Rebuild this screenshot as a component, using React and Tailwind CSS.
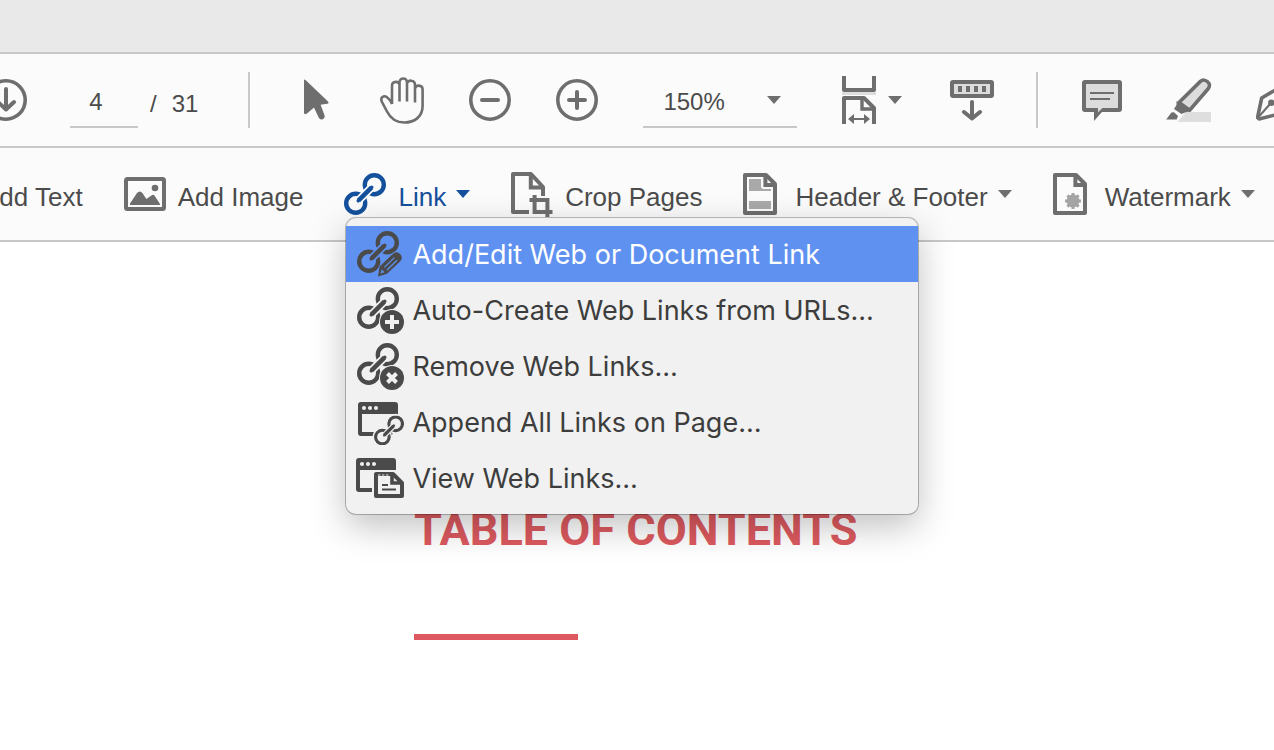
import React, { useId } from "react";

function Caret({ className = "" }) {
  return (
    <svg width="14" height="8" viewBox="0 0 14 8" fill="currentColor" className={"shrink-0 " + className} aria-hidden="true">
      <path d="M0 0H14L7 8Z" />
    </svg>
  );
}

function Icon({ w, h, children }) {
  return (
    <svg
      width={w}
      height={h}
      viewBox={`0 0 ${w} ${h}`}
      fill="none"
      stroke="currentColor"
      strokeWidth="4"
      className="shrink-0"
      aria-hidden="true"
    >
      {children}
    </svg>
  );
}

const NextPageIcon = () => (
  <Icon w={42} h={42}>
    <circle cx="21" cy="21" r="19.2" strokeWidth="3.6" />
    <path d="M21 10V29M13 23L21 30.5L29 23" strokeLinecap="round" strokeLinejoin="round" />
  </Icon>
);

const PointerIcon = () => (
  <Icon w={26} h={42}>
    <path
      d="M1 1.8Q1 -0.4 2.8 1.2L25 22.6Q26.4 24.4 24.2 24.8L17.6 25.8L21.6 36.6Q22.2 39 19.8 40.2Q17 41.2 15.8 38.8L11 28.6L4 34.4Q1 36.2 1 33.6Z"
      fill="currentColor"
      stroke="none"
    />
  </Icon>
);

const HandIcon = () => (
  <Icon w={44} h={48}>
    <path
      strokeWidth="2.6"
      strokeLinejoin="round"
      d="M12 28V10C12 4.6 19.5 4.6 19.5 9.6V25.5M19.5 10V6.6C19.5 1.2 27 1.2 27 6.6V25.5M27 8C27 3.4 35 3.4 35 9V26.5M35 13C35 8.4 42.6 8.4 42.6 13.6V30C42.6 41 34 46.5 24.5 46.5C14.5 46.5 10 41.5 7 35.5L2 26C-0.2 21.4 3.8 19 7 21.2C9.4 22.8 11 25.6 12 28"
    />
  </Icon>
);

const ZoomIcon = ({ plus }) => (
  <Icon w={42} h={42}>
    <circle cx="21" cy="21" r="19.2" strokeWidth="3.6" />
    <path d={plus ? "M13 21H29M21 13V29" : "M13 21H29"} strokeLinecap="round" />
  </Icon>
);

const FitWidthIcon = () => (
  <Icon w={34} h={48}>
    <path d="M0 16H34V19H0Z" fill="#dedede" stroke="none" />
    <path d="M2 0V14H32V0M2 48V22H22L32 32V48" strokeLinejoin="round" />
    <path d="M20 22V33H32" strokeWidth="3.4" />
    <path d="M10 43H24" strokeWidth="2" />
    <path d="M6 43L12 38V48ZM28 43L22 38V48Z" fill="currentColor" stroke="none" />
  </Icon>
);

const KeyboardIcon = () => (
  <Icon w={44} h={42}>
    <rect x="2" y="3" width="40" height="14" rx="1" fill="#dcdcdc" />
    <path d="M10 7V13M18 7V13M26 7V13M34 7V13" />
    <path d="M22 23V39M14 33L22 39.5L30 33" strokeLinecap="round" strokeLinejoin="round" />
  </Icon>
);

const CommentIcon = () => (
  <Icon w={40} h={42}>
    <path d="M12 30H22.6L12 42Z" fill="currentColor" stroke="none" />
    <rect x="2" y="3" width="36" height="28" rx="1" fill="#dcdcdc" />
    <path d="M16 28.8H20.6L16 33.6Z" fill="#dcdcdc" stroke="none" />
    <path d="M8 14H32M8 20H28" strokeWidth="2" />
  </Icon>
);

const HighlighterIcon = () => (
  <Icon w={46} h={44}>
    <path d="M20 34H45V44H11.5Z" fill="#dedede" stroke="none" />
    <path d="M13 24.5L34.4 3.4C39 -0.6 46.4 6 42.2 10.8L23.6 32.2Z" fill="#dcdcdc" strokeWidth="3.6" strokeLinejoin="round" />
    <path d="M10.5 23L25 33L19 34.5L15.5 36L8 31L10.5 27Z" fill="currentColor" stroke="none" />
    <path d="M0.2 41.6L5.4 34.6L8 34.2L12 38L10.6 41.6Z" fill="currentColor" stroke="none" />
  </Icon>
);

const SignIcon = () => (
  <Icon w={40} h={42}>
    <path d="M1.5 38.5L5.7 19L19 11.2L34 19L25 34.5L3.1 40Z" strokeLinejoin="round" strokeWidth="3.6" />
    <path d="M2.5 38L14.5 24.5" strokeWidth="2" />
    <circle cx="15.3" cy="23.8" r="3.2" fill="currentColor" stroke="none" />
  </Icon>
);

const ImageIcon = () => (
  <Icon w={42} h={34}>
    <rect x="2" y="2" width="38" height="30" rx="1.5" />
    <circle cx="31" cy="11" r="3.3" fill="currentColor" stroke="none" />
    <path d="M6 28V26.5L13 16Q15.8 13 18.4 16L22.4 22L27.4 18.4Q29.4 17 30.8 19L36 27V28Z" fill="currentColor" stroke="none" />
  </Icon>
);

function ChainPaths() {
  const gap = useId();
  return (
    <>
      <mask id={gap} maskUnits="userSpaceOnUse" x="0" y="0" width="42" height="42">
        <rect width="42" height="42" fill="#fff" stroke="none" />
        <path d="M12.6 29.4L29.4 12.6" stroke="#000" strokeWidth="8" />
      </mask>
      <g mask={`url(#${gap})`} strokeWidth="4.4">
        <circle cx="30.3" cy="11.7" r="9.5" />
        <circle cx="11.7" cy="30.3" r="9.5" />
      </g>
      <path d="M14.6 27.4L27.4 14.6" strokeWidth="4.6" />
      <path d="M14.2 27.8L15.4 26.6M26.6 15.4L27.8 14.2" strokeWidth="3.4" strokeLinecap="round" />
    </>
  );
}

const LinkIcon = () => (
  <Icon w={42} h={42}>
    <ChainPaths />
  </Icon>
);

const CropIcon = () => (
  <Icon w={42} h={46}>
    <path d="M18 41H2V3H20L32 16V25" strokeLinejoin="round" />
    <path d="M19.8 3V16.6H32" />
    <path d="M18.5 29H36.4V46M23.6 24V41H41.5" />
  </Icon>
);

const HeaderFooterIcon = () => (
  <Icon w={34} h={42}>
    <path d="M2 2H23L32 11V40H2Z" strokeLinejoin="round" />
    <path d="M22.4 2V12H32" />
    <path d="M6 6H18V13Q18 16 21 16H28V18H6ZM6 28H28V36H6Z" fill="#a9a9a9" stroke="none" />
  </Icon>
);

const WatermarkIcon = () => (
  <Icon w={34} h={42}>
    <path d="M2 2H23L32 11V40H2Z" strokeLinejoin="round" />
    <path d="M22.4 2V12H32" />
    <path d="M20 20V36M12 28H28M14.4 22.4L25.6 33.6M25.6 22.4L14.4 33.6" stroke="#a4a4a4" strokeWidth="3" />
    <circle cx="20" cy="28" r="6.4" fill="#a4a4a4" stroke="none" />
  </Icon>
);

const EditLinkIcon = () => (
  <Icon w={48} h={48}>
    <g transform="translate(1 0)">
      <ChainPaths />
    </g>
    <path d="M22 45L24 36L38 22.5Q42 20 45 24Q47 27 44 30L30 43Z" fill="#5f91f1" stroke="#5f91f1" strokeWidth="2.4" />
    <path d="M22 45.4L23.6 35.6L37.4 22.4Q41 19.8 44.6 23.4Q47.4 27 44 30.6L31 42.8Z" fill="currentColor" stroke="none" />
    <path d="M28.4 36.4L38.4 26.6M31 39L41 29.2" stroke="#5f91f1" strokeWidth="1.2" />
    <path d="M24.4 42.6L25.8 38.4L28.6 41.2Z" fill="#5f91f1" stroke="none" />
  </Icon>
);

const BadgeLinkIcon = ({ mark }) => (
  <Icon w={48} h={48}>
    <g transform="translate(1 0)">
      <ChainPaths />
    </g>
    <circle cx="36" cy="35" r="13" fill="#f1f1f1" stroke="none" />
    <circle cx="36" cy="35" r="12" fill="currentColor" stroke="none" />
    <path d={mark} stroke="#f1f1f1" />
  </Icon>
);

const AppendLinksIcon = () => (
  <Icon w={48} h={48}>
    <rect x="4" y="5" width="36" height="30" rx="1" />
    <path d="M3 4H41V15H3Z" fill="currentColor" stroke="none" />
    <g fill="#f1f1f1" stroke="none">
      <circle cx="8" cy="9" r="2" />
      <circle cx="14" cy="9" r="2" />
      <circle cx="20" cy="9" r="2" />
      <circle cx="39.7" cy="24.8" r="10" />
      <circle cx="26.3" cy="38.2" r="10" />
      <path d="M38 30H46V42H34Z" />
    </g>
    <g transform="translate(18 16.4) scale(.715)">
      <ChainPaths />
    </g>
  </Icon>
);

const ViewLinksIcon = () => (
  <Icon w={48} h={48}>
    <rect x="2" y="5" width="36" height="30" rx="1" />
    <path d="M1 4H39V15H1Z" fill="currentColor" stroke="none" />
    <g fill="#f1f1f1" stroke="none">
      <circle cx="6" cy="9" r="2" />
      <circle cx="12" cy="9" r="2" />
      <circle cx="18" cy="9" r="2" />
    </g>
    <path d="M16 15H48V45H16Z" fill="#f1f1f1" stroke="none" />
    <path d="M20 19H37L46 28V41H20Z" strokeLinejoin="round" />
    <path d="M36 18V28H46" strokeWidth="3.6" />
    <path d="M22 20H34" stroke="#9a9a9a" strokeWidth="2" strokeDasharray="2.4 1.6" />
    <path d="M26 30H32M26 34.5H40" strokeWidth="2" />
  </Icon>
);

const menuItems = [
  { label: "Add/Edit Web or Document Link", icon: <EditLinkIcon />, active: true },
  { label: "Auto-Create Web Links from URLs…", icon: <BadgeLinkIcon mark="M29 35H43M36 28V42" /> },
  { label: "Remove Web Links…", icon: <BadgeLinkIcon mark="M31.5 30.5L40.5 39.5M40.5 30.5L31.5 39.5" /> },
  { label: "Append All Links on Page…", icon: <AppendLinksIcon /> },
  { label: "View Web Links…", icon: <ViewLinksIcon /> },
];

function LinkMenu() {
  return (
    <ul
      role="menu"
      aria-label="Link"
      className="absolute top-[70px] left-0.5 z-10 w-[572px] rounded-[10px] bg-[#f1f1f1] py-2 shadow-[0_0_0_1px_rgba(0,0,0,0.25),0_12px_36px_rgba(0,0,0,0.25)]"
    >
      {menuItems.map((item) => (
        <li key={item.label} role="none">
          <button
            type="button"
            role="menuitem"
            className={
              item.active
                ? "flex h-14 w-full items-center gap-2 bg-[#5f91f1] pt-0.5 pl-[10px] text-white"
                : "flex h-14 w-full items-center gap-2 pt-0.5 pl-[10px] text-[#3d3d3d]"
            }
          >
            <span className="text-[#4a4a4a]">{item.icon}</span>
            <span className="whitespace-nowrap font-['Inter',sans-serif] text-[27px] leading-8">{item.label}</span>
          </button>
        </li>
      ))}
    </ul>
  );
}

function Tool({ icon, label, caret, active, wide }) {
  return (
    <button
      type="button"
      aria-haspopup={caret ? "menu" : undefined}
      className={
        active
          ? "flex h-full items-center gap-3 text-[#14509c]"
          : wide
            ? "flex h-full items-center gap-[18px] text-[#6e6e6e]"
            : "flex h-full items-center gap-3 text-[#6e6e6e]"
      }
    >
      {icon}
      <span className="flex items-center gap-[10px]">
        <span className={active ? "pt-1.5 whitespace-nowrap" : "pt-1.5 whitespace-nowrap text-[#4b4b4b]"}>{label}</span>
        {caret && <Caret />}
      </span>
    </button>
  );
}

function IconButton({ label, children }) {
  return (
    <button type="button" aria-label={label} className="flex shrink-0 items-center">
      {children}
    </button>
  );
}

const Divider = () => <div className="h-14 w-0.5 shrink-0 bg-[#c9c9c9]" />;

export default function App() {
  return (
    <div className="min-h-screen overflow-x-clip bg-white font-['Liberation_Sans',Arial,sans-serif]">
      <div className="h-[54px] border-b-2 border-[#c8c8c8] bg-[#e9e9e9]" />

      <header className="bg-[#fbfbfb]">
        <div className="flex h-[94px] items-center border-b-2 border-[#c8c8c8] text-2xl text-[#6e6e6e]">
          <div className="-ml-[15px] flex shrink-0 items-center">
            <IconButton label="Next page">
              <NextPageIcon />
            </IconButton>
            <input
              aria-label="Page number"
              defaultValue="4"
              className="ml-[43px] h-14 w-[68px] border-b-2 border-[#c8c8c8] bg-transparent pt-1.5 pr-4 text-center text-[#4b4b4b] outline-none"
            />
            <span className="ml-3 flex gap-[15px] pt-2 text-[#4b4b4b]">
              <span>/</span>
              <span>31</span>
            </span>
          </div>
          <div className="ml-[50px] flex shrink-0 items-center">
            <Divider />
            <div className="ml-[53px] flex items-center gap-[45px]">
              <div className="flex items-center gap-[51px]">
                <IconButton label="Select">
                  <PointerIcon />
                </IconButton>
                <IconButton label="Pan">
                  <HandIcon />
                </IconButton>
              </div>
              <IconButton label="Zoom out">
                <ZoomIcon />
              </IconButton>
              <IconButton label="Zoom in">
                <ZoomIcon plus />
              </IconButton>
              <div className="relative flex items-center">
                <select
                  aria-label="Zoom level"
                  defaultValue="150%"
                  className="h-14 w-[154px] appearance-none border-b-2 border-[#c8c8c8] bg-transparent pt-1.5 pl-5 text-[#4b4b4b] outline-none"
                >
                  <option>100%</option>
                  <option>150%</option>
                  <option>200%</option>
                </select>
                <Caret className="pointer-events-none absolute right-4" />
              </div>
              <div className="flex items-center gap-12">
                <button type="button" aria-label="Fit width" aria-haspopup="menu" className="flex items-center gap-3">
                  <FitWidthIcon />
                  <Caret />
                </button>
                <IconButton label="Show keyboard">
                  <KeyboardIcon />
                </IconButton>
              </div>
            </div>
          </div>
          <div className="ml-[42px] flex shrink-0 items-center gap-11">
            <Divider />
            <IconButton label="Comment">
              <CommentIcon />
            </IconButton>
            <IconButton label="Highlight">
              <HighlighterIcon />
            </IconButton>
            <IconButton label="Sign">
              <SignIcon />
            </IconButton>
          </div>
        </div>

        <div className="border-b-2 border-[#c8c8c8]">
          <div className="-ml-[18px] flex h-[92px] items-stretch gap-[41px] text-[26px] leading-8">
            <Tool label="Add Text" />
            <Tool icon={<ImageIcon />} label="Add Image" />
            <div className="relative">
              <Tool icon={<LinkIcon />} label="Link" caret active />
              <LinkMenu />
            </div>
            <Tool icon={<CropIcon />} label="Crop Pages" />
            <Tool icon={<HeaderFooterIcon />} label="Header & Footer" caret wide />
            <Tool icon={<WatermarkIcon />} label="Watermark" caret wide />
          </div>
        </div>
      </header>

      <main className="pt-[261px] pl-[414px]">
        <h1 className="font-['Roboto',sans-serif] text-[45px] leading-[54px] font-bold whitespace-nowrap text-[#dc5a5f]">
          TABLE OF CONTENTS
        </h1>
        <div className="mt-[77px] h-1.5 w-[164px] bg-[#dc5a5f]" />
      </main>
    </div>
  );
}
